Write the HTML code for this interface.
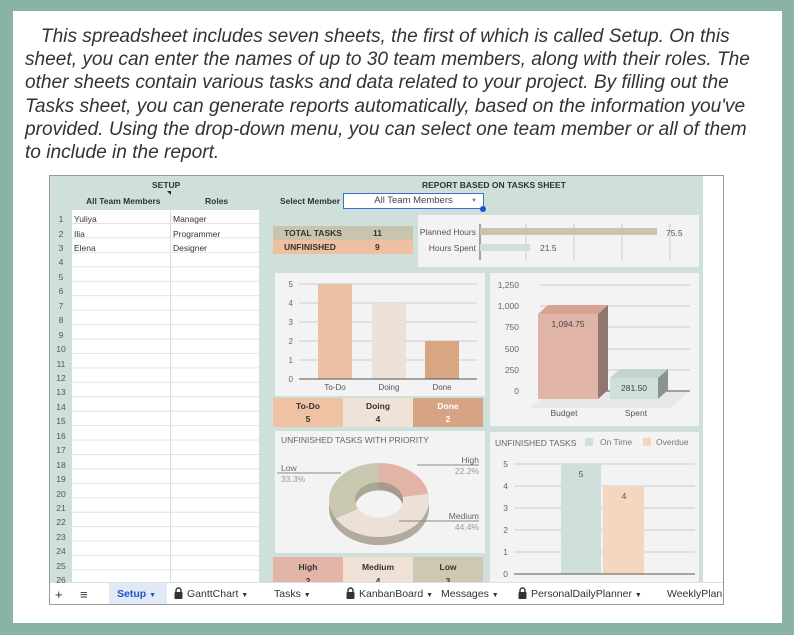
<!DOCTYPE html>
<html><head><meta charset="utf-8"><style>
*{margin:0;padding:0;box-sizing:border-box}
body{width:794px;height:635px;background:#8ab2a6;position:relative;overflow:hidden;font-family:"Liberation Sans",sans-serif}
.panel{position:absolute;left:13px;top:11px;width:769px;height:612px;background:#fff}
.intro{position:absolute;left:25px;top:25px;width:760px;font-style:italic;font-size:19.1px;line-height:23.2px;color:#333}
.a{position:absolute}
.sheet{position:absolute;left:49px;top:175px;width:675px;height:430px;background:#fff;border:1px solid #999;overflow:hidden}
.hd{font-weight:bold;font-size:8.5px;color:#333}
.rn{position:absolute;left:0;width:22px;text-align:center;font-size:8.5px;color:#555}
.cell{position:absolute;font-size:8.5px;color:#333}
.lk{display:inline-block;vertical-align:-2px;margin-right:4px}
.tb span.a{white-space:nowrap}
</style></head><body>
<div class="panel"></div>
<div class="intro">&nbsp;&nbsp;&nbsp;This spreadsheet includes seven sheets, the first of which is called Setup. On this<br>sheet, you can enter the names of up to 30 team members, along with their roles. The<br>other sheets contain various tasks and data related to your project. By filling out the<br>Tasks sheet, you can generate reports automatically, based on the information you've<br>provided. Using the drop-down menu, you can select one team member or all of them<br>to include in the report.</div>

<div class="sheet">
 <div class="a" style="left:0;top:0;width:653px;height:34px;background:#cfdfd9"></div>
 <div class="a" style="left:653px;top:0;width:22px;height:410px;background:#fff"></div>
 <div class="a" style="left:0;top:34px;width:22px;height:375px;background:#cfdfd9"></div>
 <div class="a" style="left:210px;top:34px;width:443px;height:375px;background:#cfdfd9"></div>
 <div class="a hd" style="left:102px;top:4px">SETUP</div>
 <div class="a hd" style="left:36px;top:20px">All Team Members</div>
 <div class="a hd" style="left:155px;top:20px">Roles</div>
 <div class="a" style="left:117px;top:15px;width:0;height:0;border-left:4px solid transparent;border-top:4px solid #222"></div>
 <div class="a hd" style="left:230px;top:20px">Select Member</div>
 <div class="a hd" style="left:372px;top:4px">REPORT BASED ON TASKS SHEET</div>
 <div class="a" style="left:293px;top:17px;width:141px;height:16px;background:#fff;border:1px solid #3b6fd1;font-size:9.5px;color:#444;text-align:center;line-height:14px">All Team Members<span style="position:absolute;right:6px;font-size:6px;color:#777">▼</span></div>
 <div class="a" style="left:430px;top:30px;width:6px;height:6px;border-radius:50%;background:#1a56c8"></div>
 <div class="a" style="left:22px;top:34px;width:188px;height:375px;background:#fff;
  background-image:linear-gradient(#e3e3e3 1px,transparent 1px);background-size:100% 14.45px;background-position:0 13px"></div>
 <div class="a" style="left:120px;top:34px;width:1px;height:375px;background:#ddd"></div>
 <div class="a" style="left:209px;top:34px;width:1px;height:375px;background:#ddd"></div>
 <div class="cell" style="left:24px;top:38px">Yuliya</div>
 <div class="cell" style="left:24px;top:52.5px">Ilia</div>
 <div class="cell" style="left:24px;top:67px">Elena</div>
 <div class="cell" style="left:123px;top:38px">Manager</div>
 <div class="cell" style="left:123px;top:52.5px">Programmer</div>
 <div class="cell" style="left:123px;top:67px">Designer</div>

 <div class="a hd" style="left:223px;top:50px;width:140px;height:14px;background:#c9c4ae;line-height:14px"><span style="margin-left:11px">TOTAL TASKS</span><span style="position:absolute;left:100px">11</span></div>
 <div class="a hd" style="left:223px;top:64px;width:140px;height:14px;background:#efbfa2;line-height:14px"><span style="margin-left:11px">UNFINISHED</span><span style="position:absolute;left:102px">9</span></div>

 <svg class="a" style="left:368px;top:39px" width="281" height="52">
  <rect width="281" height="52" fill="#f3f3f4"/>
  <g stroke="#ccc"><line x1="108" y1="9" x2="108" y2="45"/><line x1="156" y1="9" x2="156" y2="45"/><line x1="204" y1="9" x2="204" y2="45"/><line x1="252" y1="9" x2="252" y2="45"/></g>
  <line x1="62" y1="9" x2="62" y2="45" stroke="#555"/>
  <rect x="62" y="13" width="177" height="7" fill="#c9c4ae"/>
  <rect x="62" y="29" width="50" height="7" fill="#cfdfd9"/>
  <text x="58" y="20" font-size="8.5" text-anchor="end" fill="#555" font-family="Liberation Sans">Planned Hours</text>
  <text x="58" y="36" font-size="8.5" text-anchor="end" fill="#555" font-family="Liberation Sans">Hours Spent</text>
  <text x="248" y="21" font-size="8.5" fill="#555" font-family="Liberation Sans">75.5</text>
  <text x="122" y="36" font-size="8.5" fill="#555" font-family="Liberation Sans">21.5</text>
 </svg>

 <svg class="a" style="left:225px;top:97px" width="210" height="123">
  <rect width="210" height="123" fill="#f3f3f4"/>
  <g stroke="#ccc"><line x1="24" y1="11" x2="202" y2="11"/><line x1="24" y1="30" x2="202" y2="30"/><line x1="24" y1="49" x2="202" y2="49"/><line x1="24" y1="68" x2="202" y2="68"/><line x1="24" y1="87" x2="202" y2="87"/></g>
  <g font-size="8" fill="#666" font-family="Liberation Sans" text-anchor="end"><text x="18" y="14">5</text><text x="18" y="33">4</text><text x="18" y="52">3</text><text x="18" y="71">2</text><text x="18" y="90">1</text><text x="18" y="109">0</text></g>
  <rect x="43" y="11" width="34" height="95" fill="#ecc0a3"/>
  <rect x="97" y="30" width="34" height="76" fill="#ede0d6"/>
  <rect x="150" y="68" width="34" height="38" fill="#d9a684"/>
  <line x1="24" y1="106" x2="202" y2="106" stroke="#555"/>
  <g font-size="8" fill="#555" font-family="Liberation Sans" text-anchor="middle"><text x="60" y="117">To-Do</text><text x="114" y="117">Doing</text><text x="167" y="117">Done</text></g>
 </svg>

 <div class="a hd" style="left:223px;top:222px;width:70px;height:29px;background:#efc2a3;text-align:center;line-height:13px;padding-top:2px">To-Do<br>5</div>
 <div class="a hd" style="left:293px;top:222px;width:70px;height:29px;background:#efe3d8;text-align:center;line-height:13px;padding-top:2px">Doing<br>4</div>
 <div class="a hd" style="left:363px;top:222px;width:70px;height:29px;background:#d6a385;color:#fff;text-align:center;line-height:13px;padding-top:2px">Done<br>2</div>

 <svg class="a" style="left:225px;top:255px" width="210" height="122">
  <rect width="210" height="122" fill="#f3f3f4"/>
  <text x="6" y="12" font-size="8.5" fill="#666" font-family="Liberation Sans">UNFINISHED TASKS WITH PRIORITY</text>
  <g transform="translate(104,69) scale(1,0.74)">
   <g transform="translate(0,11) rotate(-90)" fill="none" stroke-width="26">
    <circle r="37" stroke="#a39a90" stroke-dasharray="51.6 180.9" stroke-dashoffset="0"/>
    <circle r="37" stroke="#b3aa9e" stroke-dasharray="103.3 129.2" stroke-dashoffset="-51.6"/>
    <circle r="37" stroke="#a7a793" stroke-dasharray="77.5 155" stroke-dashoffset="-154.9"/>
   </g>
   <g transform="rotate(-90)" fill="none" stroke-width="26">
    <circle r="37" stroke="#e2b4a6" stroke-dasharray="51.6 180.9" stroke-dashoffset="0"/>
    <circle r="37" stroke="#ede0d6" stroke-dasharray="103.3 129.2" stroke-dashoffset="-51.6"/>
    <circle r="37" stroke="#c9c7b0" stroke-dasharray="77.5 155" stroke-dashoffset="-154.9"/>
   </g>
  </g>
  <g stroke="#888" stroke-width="1"><line x1="142" y1="34" x2="204" y2="34"/><line x1="2" y1="42" x2="66" y2="42"/><line x1="124" y1="90" x2="204" y2="90"/></g>
  <g font-size="8.5" font-family="Liberation Sans">
   <text x="204" y="32" text-anchor="end" fill="#666">High</text><text x="204" y="43" text-anchor="end" fill="#999">22.2%</text>
   <text x="6" y="40" fill="#666">Low</text><text x="6" y="51" fill="#999">33.3%</text>
   <text x="204" y="88" text-anchor="end" fill="#666">Medium</text><text x="204" y="99" text-anchor="end" fill="#999">44.4%</text>
  </g>
 </svg>

 <div class="a hd" style="left:223px;top:381px;width:70px;height:29px;background:#e2b5a7;text-align:center;line-height:14px;padding-top:3px">High<br>2</div>
 <div class="a hd" style="left:293px;top:381px;width:70px;height:29px;background:#f0e0d6;text-align:center;line-height:14px;padding-top:3px">Medium<br>4</div>
 <div class="a hd" style="left:363px;top:381px;width:70px;height:29px;background:#cdc8b2;text-align:center;line-height:14px;padding-top:3px">Low<br>3</div>

 <svg class="a" style="left:440px;top:97px" width="209" height="153">
  <rect width="209" height="153" fill="#f3f3f4"/>
  <g stroke="#ccc"><line x1="50" y1="12" x2="200" y2="12"/><line x1="50" y1="33" x2="200" y2="33"/><line x1="50" y1="54" x2="200" y2="54"/><line x1="50" y1="76" x2="200" y2="76"/><line x1="50" y1="97" x2="200" y2="97"/></g>
  <g font-size="8.5" fill="#666" font-family="Liberation Sans" text-anchor="end"><text x="29" y="15">1,250</text><text x="29" y="36">1,000</text><text x="29" y="57">750</text><text x="29" y="79">500</text><text x="29" y="100">250</text><text x="29" y="121">0</text></g>
  <polygon points="40,135 180,135 200,118 60,118" fill="#e8e8e8"/>
  <line x1="50" y1="118" x2="200" y2="118" stroke="#555"/>
  <polygon points="48,41 108,41 118,32 58,32" fill="#d9a393"/>
  <polygon points="108,41 118,32 118,117 108,126" fill="#8f766e"/>
  <rect x="48" y="41" width="60" height="85" fill="#e0b4a7"/>
  <text x="78" y="54" font-size="8.5" text-anchor="middle" fill="#444" font-family="Liberation Sans">1,094.75</text>
  <polygon points="120,105 168,105 178,96 130,96" fill="#c3d3cd"/>
  <polygon points="168,105 178,96 178,117 168,126" fill="#8b938f"/>
  <rect x="120" y="105" width="48" height="21" fill="#cfdfd9"/>
  <text x="144" y="118" font-size="8.5" text-anchor="middle" fill="#444" font-family="Liberation Sans">281.50</text>
  <g font-size="8.5" fill="#555" font-family="Liberation Sans" text-anchor="middle"><text x="74" y="143">Budget</text><text x="146" y="143">Spent</text></g>
 </svg>

 <svg class="a" style="left:440px;top:256px" width="209" height="154">
  <rect width="209" height="154" fill="#f3f3f4"/>
  <text x="5" y="14" font-size="8.5" fill="#666" font-family="Liberation Sans">UNFINISHED TASKS</text>
  <rect x="95" y="6" width="8" height="8" fill="#cfdfd9"/><text x="110" y="13" font-size="8.5" fill="#777" font-family="Liberation Sans">On Time</text>
  <rect x="153" y="6" width="8" height="8" fill="#f5d6bf"/><text x="166" y="13" font-size="8.5" fill="#777" font-family="Liberation Sans">Overdue</text>
  <g stroke="#ccc"><line x1="24" y1="32" x2="205" y2="32"/><line x1="24" y1="54" x2="205" y2="54"/><line x1="24" y1="76" x2="205" y2="76"/><line x1="24" y1="98" x2="205" y2="98"/><line x1="24" y1="120" x2="205" y2="120"/></g>
  <g font-size="8.5" fill="#666" font-family="Liberation Sans" text-anchor="end"><text x="18" y="35">5</text><text x="18" y="57">4</text><text x="18" y="79">3</text><text x="18" y="101">2</text><text x="18" y="123">1</text><text x="18" y="145">0</text></g>
  <rect x="71" y="32" width="40" height="110" fill="#cfdfd9"/>
  <rect x="113" y="54" width="41" height="88" fill="#f5d6bf"/>
  <line x1="24" y1="142" x2="205" y2="142" stroke="#555"/>
  <text x="91" y="45" font-size="8.5" text-anchor="middle" fill="#555" font-family="Liberation Sans">5</text>
  <text x="134" y="67" font-size="8.5" text-anchor="middle" fill="#555" font-family="Liberation Sans">4</text>
 </svg>

 <div class="a tb" style="left:0;top:406px;width:675px;height:24px;background:#fff;border-top:1px solid #e0e0e0;font-size:10.5px;color:#333;line-height:23px">
  <span class="a" style="left:5px;font-size:13px">+</span>
  <span class="a" style="left:30px;font-size:13px">≡</span>
  <span class="a" style="left:59px;width:58px;height:23px;background:#e1e9f7;color:#1a56c8;padding-left:8px;font-weight:bold">Setup <span style="font-size:7px">▼</span></span>
  <span class="a" style="left:124px"><svg class="lk" width="9" height="12" viewBox="0 0 9 12"><path d="M2 5V3.5a2.5 2.5 0 0 1 5 0V5" fill="none" stroke="#333" stroke-width="1.4"/><rect x="0.5" y="5" width="8" height="7" rx="1" fill="#333"/></svg>GanttChart <span style="font-size:7px">▼</span></span>
  <span class="a" style="left:224px">Tasks <span style="font-size:7px">▼</span></span>
  <span class="a" style="left:296px"><svg class="lk" width="9" height="12" viewBox="0 0 9 12"><path d="M2 5V3.5a2.5 2.5 0 0 1 5 0V5" fill="none" stroke="#333" stroke-width="1.4"/><rect x="0.5" y="5" width="8" height="7" rx="1" fill="#333"/></svg>KanbanBoard <span style="font-size:7px">▼</span></span>
  <span class="a" style="left:391px">Messages <span style="font-size:7px">▼</span></span>
  <span class="a" style="left:468px"><svg class="lk" width="9" height="12" viewBox="0 0 9 12"><path d="M2 5V3.5a2.5 2.5 0 0 1 5 0V5" fill="none" stroke="#333" stroke-width="1.4"/><rect x="0.5" y="5" width="8" height="7" rx="1" fill="#333"/></svg>PersonalDailyPlanner <span style="font-size:7px">▼</span></span>
  <span class="a" style="left:617px">WeeklyPlanner <span style="font-size:7px">▼</span></span>
 </div>
 <div class="a" style="left:0;top:34px;width:22px">
  <div class="rn" style="top:4px">1</div><div class="rn" style="top:18.5px">2</div><div class="rn" style="top:33px">3</div><div class="rn" style="top:47.4px">4</div><div class="rn" style="top:61.8px">5</div><div class="rn" style="top:76.3px">6</div><div class="rn" style="top:90.7px">7</div><div class="rn" style="top:105.2px">8</div><div class="rn" style="top:119.6px">9</div><div class="rn" style="top:134px">10</div><div class="rn" style="top:148.5px">11</div><div class="rn" style="top:163px">12</div><div class="rn" style="top:177.4px">13</div><div class="rn" style="top:191.8px">14</div><div class="rn" style="top:206.3px">15</div><div class="rn" style="top:220.7px">16</div><div class="rn" style="top:235.2px">17</div><div class="rn" style="top:249.6px">18</div><div class="rn" style="top:264px">19</div><div class="rn" style="top:278.5px">20</div><div class="rn" style="top:293px">21</div><div class="rn" style="top:307.4px">22</div><div class="rn" style="top:321.8px">23</div><div class="rn" style="top:336.3px">24</div><div class="rn" style="top:350.7px">25</div><div class="rn" style="top:365px">26</div>
 </div>
</div>
</body></html>
